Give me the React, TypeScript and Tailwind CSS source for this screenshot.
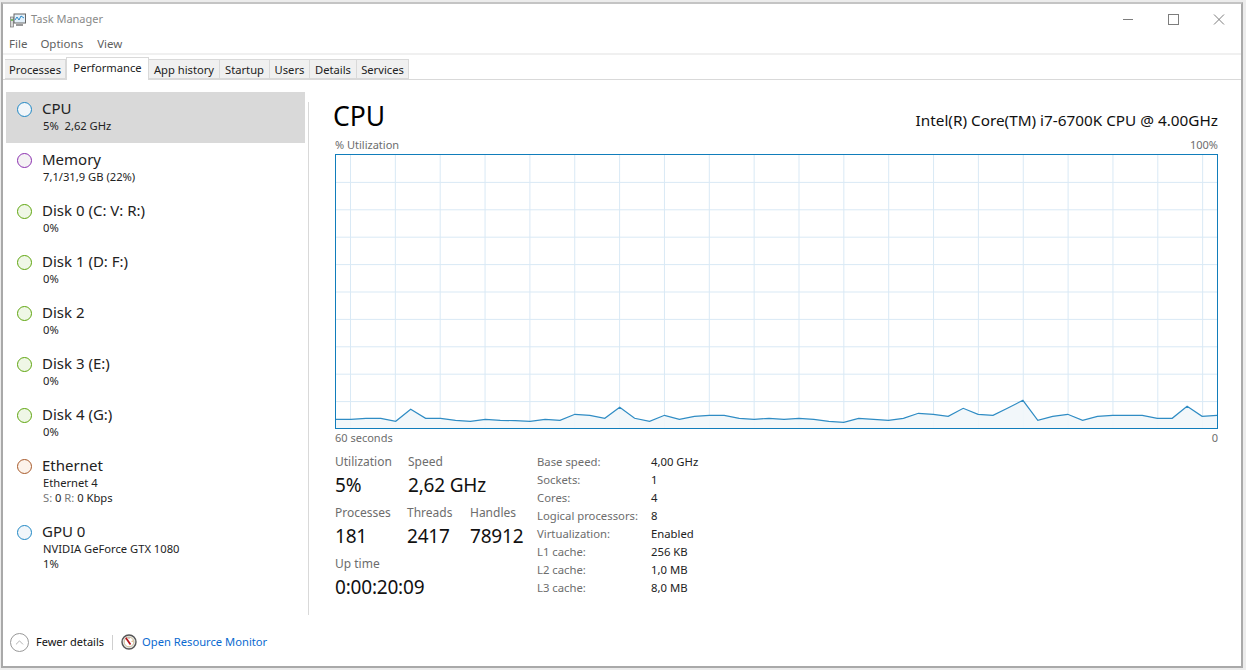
import React from 'react';
import { ChevronUp } from 'lucide-react';

const tabs = [
  { label: 'Processes', w: 'w-[61px]' },
  { label: 'Performance', w: 'w-[83px]', active: true },
  { label: 'App history', w: 'w-[71px]' },
  { label: 'Startup', w: 'w-[50px]' },
  { label: 'Users', w: 'w-[40px]' },
  { label: 'Details', w: 'w-[47px]' },
  { label: 'Services', w: 'w-[52px]' },
];

const sidebar = [
  { name: 'CPU', lines: ['5%  2,62 GHz'], ring: 'border-[#1f87c4]', fill: 'bg-[#f1f6fa]', active: true },
  { name: 'Memory', lines: ['7,1/31,9 GB (22%)'], ring: 'border-[#8b2fb0]', fill: 'bg-[#f4f2f4]' },
  { name: 'Disk 0 (C: V: R:)', lines: ['0%'], ring: 'border-[#5ea50e]', fill: 'bg-[#eff7e6]' },
  { name: 'Disk 1 (D: F:)', lines: ['0%'], ring: 'border-[#5ea50e]', fill: 'bg-[#eff7e6]' },
  { name: 'Disk 2', lines: ['0%'], ring: 'border-[#5ea50e]', fill: 'bg-[#eff7e6]' },
  { name: 'Disk 3 (E:)', lines: ['0%'], ring: 'border-[#5ea50e]', fill: 'bg-[#eff7e6]' },
  { name: 'Disk 4 (G:)', lines: ['0%'], ring: 'border-[#5ea50e]', fill: 'bg-[#eff7e6]' },
  { name: 'Ethernet', lines: ['Ethernet 4', 'net'], ring: 'border-[#a7592a]', fill: 'bg-[#fcf3eb]' },
  { name: 'GPU 0', lines: ['NVIDIA GeForce GTX 1080', '1%'], ring: 'border-[#1f87c4]', fill: 'bg-[#f1f6fa]' },
];

const specs = [
  ['Base speed:', '4,00 GHz'],
  ['Sockets:', '1'],
  ['Cores:', '4'],
  ['Logical processors:', '8'],
  ['Virtualization:', 'Enabled'],
  ['L1 cache:', '256 KB'],
  ['L2 cache:', '1,0 MB'],
  ['L3 cache:', '8,0 MB'],
];

// y readings of the usage trace, one per sample
const trace = [
  118, 118, 115, 115, 124, 88, 115, 115, 121, 124, 118, 121, 122, 124, 118, 121, 103, 106, 115, 82, 115, 124, 106, 118, 109, 106, 106,
  115, 118, 115, 118, 115, 118, 124, 127, 115, 118, 121, 115, 100, 103, 109, 85, 103, 106, 84, 61, 121, 109, 103, 121, 109, 106, 106, 106,
  115, 115, 79, 109, 106,
];

const UsageChart = () => {
  const W = 883;
  const H = 275;
  const step = (W - 2) / (trace.length - 1);
  const pts = trace.map((v, i) => `${(1 + i * step).toFixed(1)},${(380 + v / 3 - 154).toFixed(1)}`);
  const verticals = Array.from({ length: 20 }, (_, i) => 15.5 + i * 44.85);
  const horizontals = Array.from({ length: 9 }, (_, i) => 28.4 + i * 27.4);
  return (
    <svg width={W} height={H} viewBox={`0 0 ${W} ${H}`} className="block">
      {verticals.map((x) => (
        <line key={x} x1={x} x2={x} y1={0} y2={H} stroke="#d9e9f5" strokeWidth="1" />
      ))}
      {horizontals.map((y) => (
        <line key={y} x1={0} x2={W} y1={y} y2={y} stroke="#d9e9f5" strokeWidth="1" />
      ))}
      <polygon points={`0,${H} ${pts.join(' ')} ${W},${H}`} fill="#f1f6fa" fillOpacity="0.9" />
      <polyline points={pts.join(' ')} fill="none" stroke="#2f8cc4" strokeWidth="1.2" />
      <rect x="0.5" y="0.5" width={W - 1} height={H - 1} fill="none" stroke="#117dbb" strokeWidth="1" />
    </svg>
  );
};

const AppIcon = () => (
  <svg width="16" height="16" viewBox="0 0 16 16" className="block">
    <rect x="0.5" y="5" width="3" height="10" fill="#d8d8d8" stroke="#777" strokeWidth="0.7" />
    <rect x="1.2" y="7" width="1.6" height="2" fill="#5fb548" />
    <rect x="4" y="2" width="11.5" height="9" fill="#e4f1fb" stroke="#666" strokeWidth="1" />
    <polyline points="5,8 7,5 9,8 11,4 14,6" fill="none" stroke="#2b89c8" strokeWidth="1" />
    <rect x="6" y="12" width="7" height="2" fill="#9a9a9a" />
  </svg>
);

const GaugeIcon = () => (
  <svg width="16" height="16" viewBox="0 0 16 16" className="block">
    <circle cx="8" cy="8" r="7" fill="#e6e6e6" stroke="#555" strokeWidth="1.4" />
    <circle cx="8" cy="8" r="4.8" fill="#fff" stroke="#c9b98f" strokeWidth="0.9" />
    <line x1="4.8" y1="3.8" x2="9.5" y2="10.5" stroke="#b5151c" strokeWidth="1.7" />
    <line x1="8" y1="3.5" x2="8" y2="5" stroke="#888" strokeWidth="0.8" />
    <line x1="12" y1="7" x2="10.6" y2="7.4" stroke="#d08a3a" strokeWidth="0.8" />
  </svg>
);

const WindowButtons = () => (
  <svg width="102" height="12" viewBox="0 0 102 12" className="block mr-[16px]">
    <line x1="0" x2="10" y1="5.5" y2="5.5" stroke="#7d7d7d" strokeWidth="1" />
    <rect x="45.5" y="0.5" width="10" height="10" fill="none" stroke="#7d7d7d" strokeWidth="1" />
    <path d="M91 0.5 L101 10.5 M101 0.5 L91 10.5" fill="none" stroke="#7d7d7d" strokeWidth="1" />
  </svg>
);

const Stat = ({ label, value, w }: { label: string; value: string; w: string }) => (
  <div className={w}>
    <div className="text-[12px] leading-[16px] text-[#6d6d6d]">{label}</div>
    <div className="mt-[2px] text-[19px] leading-[26px] tracking-[-0.2px] text-[#111]">{value}</div>
  </div>
);

export default function App() {
  return (
    <div className="w-[1246px] h-[670px] bg-[#ececec] pl-[1px] pt-[2px] overflow-hidden font-['Noto_Sans','Open_Sans',sans-serif]">
      <div className="w-[1242px] h-[666px] border-2 border-[#a9a9a9] border-t-[#c4c4c4] bg-white flex flex-col">
        {/* title bar */}
        <div className="h-[31px] flex items-center pl-[7px] shrink-0">
          <AppIcon />
          <span className="ml-[5px] text-[11px] text-[#8a8a8a]">Task Manager</span>
          <div className="ml-auto">
            <WindowButtons />
          </div>
        </div>
        {/* menu */}
        <div className="h-[18px] flex items-center gap-[13px] pl-[6px] text-[11.5px] text-[#5f5f5f] border-b-2 border-[#f0f0f0] shrink-0 box-content">
          <span>File</span>
          <span>Options</span>
          <span className="ml-px">View</span>
        </div>
        {/* tabs */}
        <div className="h-[24px] flex items-end pl-[2px] border-b border-[#d9d9d9] shrink-0 box-content">
          {tabs.map((t) =>
            t.active ? (
              <div key={t.label} className={`${t.w} h-[23px] -mb-px bg-white border border-b-0 border-[#d9d9d9] text-center text-[11.2px] leading-[19px] text-[#222]`}>
                {t.label}
              </div>
            ) : (
              <div key={t.label} className={`${t.w} h-[20px] bg-[#f0f0f0] border-y border-r border-[#d9d9d9] text-center text-[11.2px] leading-[19px] text-[#222]`}>
                {t.label}
              </div>
            ),
          )}
        </div>
        {/* body */}
        <div className="flex flex-1 min-h-0">
          <div className="w-[305px] pl-[3px] pt-[12px] shrink-0">
            {sidebar.map((s) => (
              <div key={s.name} className={`w-[299px] flex pl-[11px] pt-[7px] ${s.lines.length > 1 ? 'h-[66px]' : 'h-[51px]'} ${s.active ? 'bg-[#d9d9d9]' : ''}`}>
                <div className={`w-[15px] h-[15px] mt-[3px] rounded-full border-[1.5px] shrink-0 ${s.ring} ${s.fill}`} />
                <div className="ml-[10px]">
                  <div className="text-[15px] leading-[19px] text-[#222]">{s.name}</div>
                  {s.lines.map((l) => (
                    <div key={l} className="ml-px text-[11.2px] leading-[15px] text-[#222] whitespace-pre">
                      {l === 'net' ? (
                        <>
                          <span className="text-[#777]">S:</span> 0 <span className="text-[#777]">R:</span> 0 Kbps
                        </>
                      ) : (
                        l
                      )}
                    </div>
                  ))}
                </div>
              </div>
            ))}
          </div>
          <div className="w-px h-[513px] mt-[22px] bg-[#d9d9d9] shrink-0" />
          <div className="ml-[24px] w-[885px] pt-[20px] shrink-0">
            <div className="h-[33px] flex items-center justify-between">
              <span className="text-[26.5px] leading-[33px] text-black">CPU</span>
              <span className="text-[15.3px] mt-[8px] text-[#111]">Intel(R) Core(TM) i7-6700K CPU @ 4.00GHz</span>
            </div>
            <div className="ml-[2px] mt-[4px] flex justify-between h-[16px] text-[11px] leading-[16px] text-[#6d6d6d]">
              <span>% Utilization</span>
              <span>100%</span>
            </div>
            <div className="ml-[2px] mt-[1px]">
              <UsageChart />
            </div>
            <div className="ml-[2px] mt-[1px] flex justify-between h-[16px] text-[11px] leading-[16px] text-[#6d6d6d]">
              <span>60 seconds</span>
              <span>0</span>
            </div>
            <div className="ml-[2px] mt-[8px] flex">
              <div className="w-[202px] shrink-0">
                <div className="h-[51px] flex">
                  <Stat label="Utilization" value="5%" w="w-[73px]" />
                  <Stat label="Speed" value="2,62 GHz" w="w-[110px]" />
                </div>
                <div className="h-[51px] flex">
                  <Stat label="Processes" value="181" w="w-[72px]" />
                  <Stat label="Threads" value="2417" w="w-[63px]" />
                  <Stat label="Handles" value="78912" w="w-[60px]" />
                </div>
                <Stat label="Up time" value="0:00:20:09" w="w-[120px]" />
              </div>
              <div className="grid grid-cols-[114px_1fr] auto-rows-[18px] text-[11.3px] leading-[16px]">
                {specs.map(([k, v]) => (
                  <React.Fragment key={k}>
                    <span className="text-[#6d6d6d]">{k}</span>
                    <span className="text-[#222]">{v}</span>
                  </React.Fragment>
                ))}
              </div>
            </div>
          </div>
        </div>
        {/* footer */}
        <div className="h-[48px] flex items-center pl-[7px] shrink-0">
          <div className="w-[19px] h-[19px] rounded-full border border-[#999] flex items-center justify-center">
            <ChevronUp className="w-[13px] h-[13px] text-[#999]" strokeWidth={1.4} />
          </div>
          <span className="ml-[7px] text-[11px] text-[#111]">Fewer details</span>
          <div className="ml-[8px] w-px h-[15px] bg-[#cfcfcf]" />
          <div className="ml-[8px]">
            <GaugeIcon />
          </div>
          <span className="ml-[5px] text-[11.2px] text-[#0a6ad0]">Open Resource Monitor</span>
        </div>
      </div>
    </div>
  );
}
